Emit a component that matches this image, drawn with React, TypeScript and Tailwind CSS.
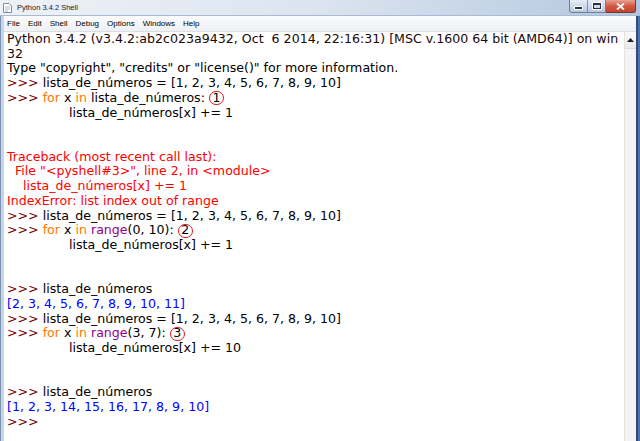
import React from "react";

const P = () => <span className="text-[#770000]">{">>> "}</span>;
const K = ({ t }: { t: string }) => <span className="text-[#ff7700]">{t}</span>;
const B = ({ t }: { t: string }) => <span className="text-[#900090]">{t}</span>;

const Circ = ({ n }: { n: string }) => (
  <span className="inline-flex items-center justify-center w-[15px] h-[14px] rounded-full border-[1.5px] border-[#e01818] align-[0px] leading-none text-black">
    {n}
  </span>
);

const Line = ({ children, cls = "" }: { children?: React.ReactNode; cls?: string }) => (
  <div className={`h-[14.73px] leading-[14.73px] whitespace-pre ${cls}`}>{children}</div>
);

const LIST = "lista_de_números = [1, 2, 3, 4, 5, 6, 7, 8, 9, 10]";

export default function App() {
  return (
    <div className="w-[640px] h-[441px] flex flex-col overflow-hidden bg-[#c3d3e7]">
      {/* Title bar */}
      <div className="h-[16px] flex items-start bg-gradient-to-r from-[#eef2f7] via-[#dbe4ef] to-[#b3c7e0] border-b border-[#a9bad2]">
        <div className="flex items-center h-[16px] pl-[3px] gap-[5px]">
          <svg width="9" height="10" viewBox="0 0 9 10">
            <path d="M0.5 0.5 H6 L8.5 3 V9.5 H0.5 Z" fill="#ffffff" stroke="#8a8a8a" />
            <path d="M2 4 H7 M2 6 H7 M2 8 H5" stroke="#9aa8c0" strokeWidth="0.8" />
          </svg>
          <span className="font-['Liberation_Sans',Arial,sans-serif] text-[7.5px] text-[#1a1a1a]">
            Python 3.4.2 Shell
          </span>
        </div>
        <div className="ml-auto flex items-start mr-[4px]">
          <div className="flex h-[13px] rounded-bl-[3px] border border-t-0 border-[#6d7f99] overflow-hidden">
            <div className="w-[18px] h-full bg-gradient-to-b from-[#e6edf6] to-[#b7c8df] border-r border-[#7f92ad] flex items-end justify-center pb-[3px]">
              <div className="w-[7px] h-[2px] bg-[#2a3240] outline outline-1 outline-white" />
            </div>
            <div className="w-[17px] h-full bg-gradient-to-b from-[#e6edf6] to-[#b7c8df] flex items-center justify-center">
              <div className="w-[8px] h-[6px] border border-t-2 border-[#2a3240] outline outline-1 outline-white" />
            </div>
          </div>
          <div className="w-[30px] h-[13px] rounded-br-[3px] border border-t-0 border-l-0 border-[#6d3b37] bg-gradient-to-b from-[#e7a193] via-[#d2583f] to-[#c4452f] flex items-center justify-center">
            <svg width="9" height="7" viewBox="0 0 9 7">
              <path d="M1 0.5 L8 6.5 M8 0.5 L1 6.5" stroke="#ffffff" strokeWidth="1.8" />
            </svg>
          </div>
        </div>
      </div>

      <div className="flex-1 flex">
        {/* left frame */}
        <div className="w-[4px] bg-[#c6d5e8] border-l border-[#7d93b3]" />
        <div className="flex-1 flex flex-col">
          {/* menu bar */}
          <div className="h-[16px] flex items-center gap-[8px] pl-[3px] bg-gradient-to-b from-[#fbfcfd] to-[#eef0f4] border-b border-[#d8dde6] font-['Liberation_Sans',Arial,sans-serif] text-[8px] text-black">
            <span>File</span>
            <span>Edit</span>
            <span>Shell</span>
            <span>Debug</span>
            <span>Options</span>
            <span>Windows</span>
            <span>Help</span>
          </div>
          <div className="flex-1 flex">
            <div className="flex-1 bg-white pl-[3px] pt-[0px] font-['DejaVu_Sans',Verdana,sans-serif] text-[12.6px] text-black overflow-hidden">
              <Line cls="text-[#1c0808]">Python 3.4.2 (v3.4.2:ab2c023a9432, Oct  6 2014, 22:16:31) [MSC v.1600 64 bit (AMD64)] on win</Line>
              <Line cls="text-[#1c0808]">32</Line>
              <Line>Type "copyright", "credits" or "license()" for more information.</Line>
              <Line><P />{LIST}</Line>
              <Line><P /><K t="for" /> x <K t="in" /> lista_de_números: <Circ n="1" /></Line>
              <Line cls="pl-[62px]">lista_de_números[x] += 1</Line>
              <Line />
              <Line />
              <Line cls="text-[#ff0000]">Traceback (most recent call last):</Line>
              <Line cls="text-[#ff0000]">  File "&lt;pyshell#3&gt;", line 2, in &lt;module&gt;</Line>
              <Line cls="text-[#ff0000]">    lista_de_números[x] += 1</Line>
              <Line cls="text-[#ff0000]">IndexError: list index out of range</Line>
              <Line><P />{LIST}</Line>
              <Line><P /><K t="for" /> x <K t="in" /> <B t="range" />(0, 10): <Circ n="2" /></Line>
              <Line cls="pl-[62px]">lista_de_números[x] += 1</Line>
              <Line />
              <Line />
              <Line><P />lista_de_números</Line>
              <Line cls="text-[#0000ff]">[2, 3, 4, 5, 6, 7, 8, 9, 10, 11]</Line>
              <Line><P />{LIST}</Line>
              <Line><P /><K t="for" /> x <K t="in" /> <B t="range" />(3, 7): <Circ n="3" /></Line>
              <Line cls="pl-[62px]">lista_de_números[x] += 10</Line>
              <Line />
              <Line />
              <Line><P />lista_de_números</Line>
              <Line cls="text-[#0000ff]">[1, 2, 3, 14, 15, 16, 17, 8, 9, 10]</Line>
              <Line><P /></Line>
            </div>
            {/* scrollbar */}
            <div className="w-[12px] bg-[#f3f3f3] border-l border-[#e2e2e2] flex flex-col">
              <div className="h-[17px] bg-gradient-to-b from-[#fafafa] to-[#e9e9e9] border-b border-[#dcdcdc] flex items-center justify-center">
                <svg width="7" height="4" viewBox="0 0 7 4">
                  <path d="M0 4 L3.5 0 L7 4 Z" fill="#202020" />
                </svg>
              </div>
            </div>
          </div>
        </div>
        {/* right frame */}
        <div className="w-[4px] bg-[#2c4c84] border-r-2 border-[#4f70a8]" />
      </div>
    </div>
  );
}
